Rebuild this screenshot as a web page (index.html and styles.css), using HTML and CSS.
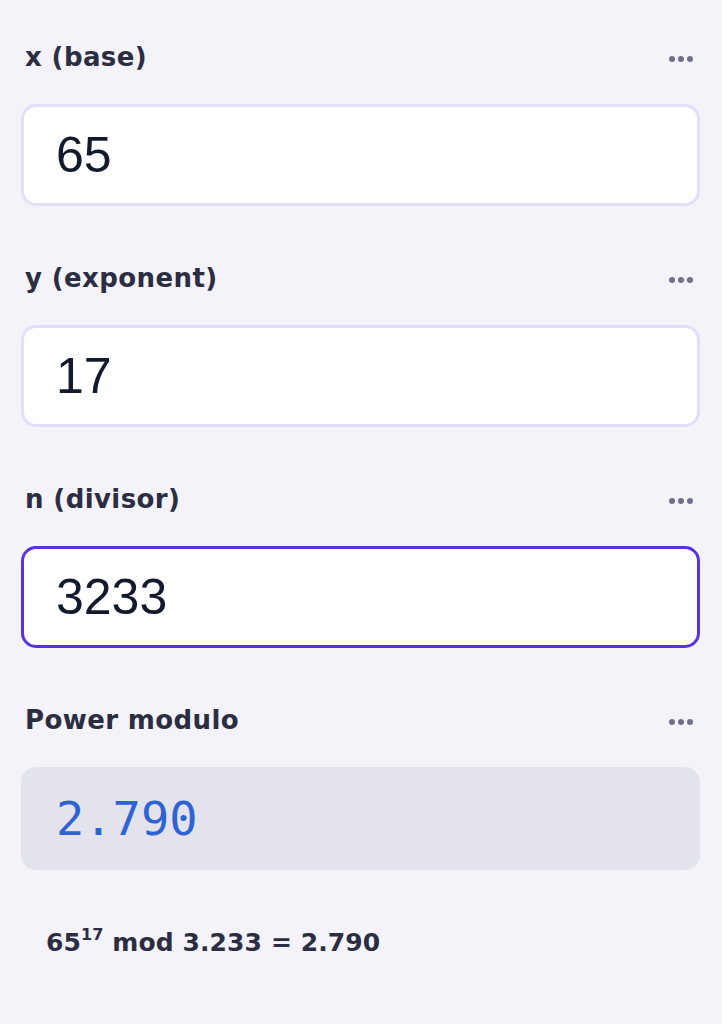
FILE: index.html
```html
<!DOCTYPE html>
<html>
<head>
<meta charset="utf-8">
<link rel="stylesheet" href="styles.css">
</head>
<body>
<div class="panel">
  <div class="field">
    <div class="label-row"><span class="label">x (base)</span><span class="dots"><i></i><i></i><i></i></span></div>
    <div class="box">65</div>
  </div>
  <div class="field">
    <div class="label-row"><span class="label">y (exponent)</span><span class="dots"><i></i><i></i><i></i></span></div>
    <div class="box">17</div>
  </div>
  <div class="field">
    <div class="label-row"><span class="label">n (divisor)</span><span class="dots"><i></i><i></i><i></i></span></div>
    <div class="box focused">3233</div>
  </div>
  <div class="field">
    <div class="label-row"><span class="label">Power modulo</span><span class="dots"><i></i><i></i><i></i></span></div>
    <div class="result">2.790</div>
  </div>
  <div class="formula">65<sup>17</sup> mod 3.233 = 2.790</div>
</div>
</body>
</html>
```
FILE: styles.css
```css
html, body {
  margin: 0;
  padding: 0;
  background: #f4f3fa;
}
.panel {
  padding: 37px 22px 0 21px;
  display: flex;
  flex-direction: column;
  gap: 52px;
}
.field {
  display: flex;
  flex-direction: column;
  gap: 27px;
}
.label-row {
  height: 40px;
  display: flex;
  align-items: center;
  justify-content: space-between;
  padding-left: 4px;
}
.label {
  font-family: "DejaVu Sans", "Open Sans", sans-serif;
  font-weight: 700;
  font-size: 26px;
  letter-spacing: 0.4px;
  color: #2b2e43;
}
.dots {
  display: flex;
  gap: 3px;
  margin-right: 7px;
  margin-top: 4px;
}
.dots i {
  width: 6px;
  height: 6px;
  border-radius: 50%;
  background: #6f6f88;
}
.box {
  box-sizing: border-box;
  height: 102px;
  border: 3px solid #e5defa;
  border-radius: 15px;
  background: #ffffff;
  display: flex;
  align-items: center;
  padding-left: 32px;
  font-family: "Liberation Sans", Arial, sans-serif;
  font-size: 50px;
  color: #141a2e;
}
.box.focused {
  border-color: #5a30e0;
}
.result {
  box-sizing: border-box;
  height: 103px;
  border-radius: 15px;
  background: #e3e3eb;
  display: flex;
  align-items: center;
  padding-left: 35px;
  font-family: "DejaVu Sans Mono", monospace;
  font-size: 47px;
  color: #2f62d3;
}
.formula {
  margin-top: 6px;
  padding-left: 25px;
  font-family: "DejaVu Sans", "Open Sans", sans-serif;
  font-weight: 700;
  font-size: 25px;
  letter-spacing: 0.1px;
  color: #2b2e43;
}
.formula sup {
  font-size: 16px;
  vertical-align: 11px;
  line-height: 0;
}
```
